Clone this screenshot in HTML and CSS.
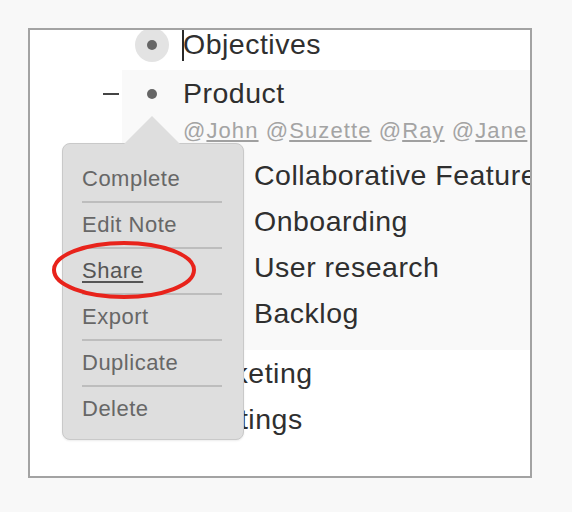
FILE: index.html
```html
<!DOCTYPE html>
<html>
<head>
<meta charset="utf-8">
<link rel="stylesheet" href="styles.css">
</head>
<body>
<div class="frame">
  <div class="outline">
    <div class="row top">
      <div class="bullet"><span class="halo"></span><span class="dot"></span></div>
      <div class="text"><span class="caret"></span>Objectives</div>
    </div>
    <div class="product">
      <div class="gutter"><span class="dash"></span></div>
      <div class="block">
        <div class="row">
          <div class="bullet"><span class="dot"></span></div>
          <div class="text">Product</div>
        </div>
        <div class="mentions">@<u>John</u> @<u>Suzette</u> @<u>Ray</u> @<u>Jane</u></div>
        <div class="children">
          <div class="row"><div class="bullet"><span class="dot"></span></div><div class="text">Collaborative Features</div></div>
          <div class="row"><div class="bullet"><span class="dot"></span></div><div class="text">Onboarding</div></div>
          <div class="row"><div class="bullet"><span class="dot"></span></div><div class="text">User research</div></div>
          <div class="row"><div class="bullet"><span class="dot"></span></div><div class="text">Backlog</div></div>
        </div>
      </div>
    </div>
    <div class="row top">
      <div class="bullet"><span class="dot"></span></div>
      <div class="text">Marketing</div>
    </div>
    <div class="row top">
      <div class="bullet"><span class="dot"></span></div>
      <div class="text">Meetings</div>
    </div>
  </div>

  <div class="menu">
    <div class="item">Complete</div>
    <div class="item">Edit Note</div>
    <div class="item"><span class="share">Share</span></div>
    <div class="item">Export</div>
    <div class="item">Duplicate</div>
    <div class="item">Delete</div>
  </div>

  <svg class="circle" width="150" height="62" viewBox="0 0 150 62">
    <ellipse cx="74" cy="31" rx="70" ry="27" fill="none" stroke="#e8231b" stroke-width="4"/>
  </svg>
</div>
</body>
</html>
```

FILE: styles.css
```css
html, body {
  margin: 0;
  padding: 0;
  background: #f8f8f8;
}

body {
  font-family: "Liberation Sans", Arial, sans-serif;
  color: #2f2f2f;
}

.frame {
  position: relative;
  margin: 28px 0 0 28px;
  width: 500px;
  height: 446px;
  border: 2px solid #a3a3a3;
  background: #ffffff;
  overflow: hidden;
}

.outline {
  margin-top: -9px;
}

.row {
  display: flex;
  height: 46px;
  align-items: center;
  white-space: nowrap;
}

.row.top {
  padding-left: 92px;
}

.bullet {
  position: relative;
  flex: 0 0 61px;
  height: 46px;
}

.dot {
  position: absolute;
  left: 25px;
  top: 19px;
  width: 10px;
  height: 10px;
  border-radius: 50%;
  background: #666666;
}

.halo {
  position: absolute;
  left: 13px;
  top: 7px;
  width: 34px;
  height: 34px;
  border-radius: 50%;
  background: #e3e3e3;
}

.text {
  font-size: 28.5px;
  line-height: 46px;
  letter-spacing: 0.5px;
}

.caret {
  display: inline-block;
  width: 2px;
  height: 33px;
  margin-left: -1px;
  margin-right: -1px;
  vertical-align: -7px;
  background: #2a2a2a;
}

.product {
  display: grid;
  grid-template-columns: 92px 1fr;
  margin-top: 3px;
}

.gutter {
  display: flex;
  justify-content: flex-end;
  align-items: center;
  height: 46px;
  padding-right: 3px;
}

.dash {
  display: block;
  width: 16px;
  height: 2px;
  margin-top: 1px;
  background: #444444;
}

.block {
  background: #f9f9f9;
  padding-bottom: 14px;
}

.mentions {
  padding-left: 61px;
  margin: 3px 0 9px;
  font-size: 22px;
  line-height: 24px;
  letter-spacing: 1.1px;
  color: #a4a4a4;
  white-space: nowrap;
}

.mentions u {
  text-decoration-color: #a0a0a0;
  text-decoration-thickness: 2px;
  text-underline-offset: 2px;
}

.children {
  padding-left: 71px;
}

.menu {
  position: absolute;
  left: 32px;
  top: 113px;
  width: 140px;
  padding: 13px 21px 8px 19px;
  border: 1px solid #c9c9c9;
  border-radius: 8px;
  background: #dedede;
  box-shadow: 0 1px 2px rgba(0, 0, 0, 0.08);
}

.menu::before {
  content: "";
  position: absolute;
  left: 61px;
  top: -28px;
  width: 0;
  height: 0;
  border-left: 28px solid transparent;
  border-right: 28px solid transparent;
  border-bottom: 28px solid #dedede;
}

.item {
  height: 44px;
  font-size: 22px;
  line-height: 44px;
  letter-spacing: 0.5px;
  color: #676767;
  white-space: nowrap;
}

.item + .item {
  border-top: 2px solid #bdbdbd;
}

.share {
  color: #555555;
  text-decoration: underline;
  text-decoration-thickness: 2px;
  text-underline-offset: 3px;
}

.circle {
  position: absolute;
  left: 20px;
  top: 209px;
}
```
